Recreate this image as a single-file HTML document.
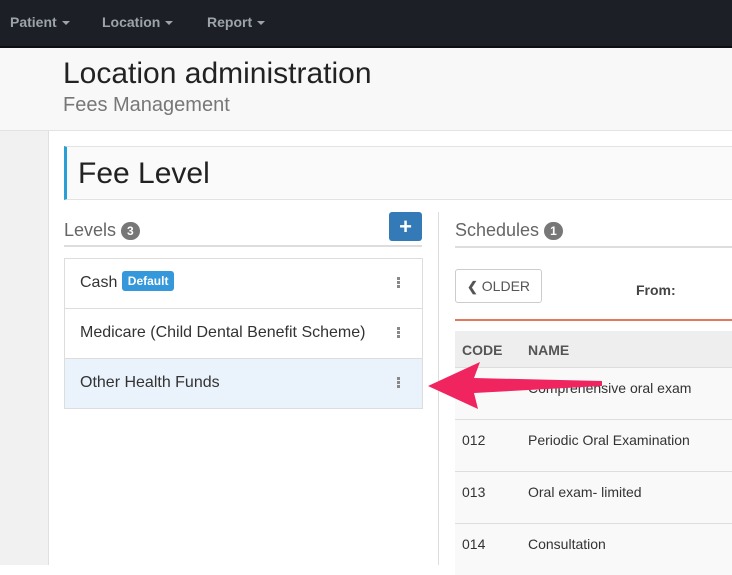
<!DOCTYPE html>
<html><head><style>
body{margin:0;width:732px;height:565px;overflow:hidden;font-family:"Liberation Sans",sans-serif;background:#fff;position:relative}
.a{position:absolute}
.nav{left:0;top:0;width:732px;height:46px;background:#1c2026;border-bottom:2px solid #0d0f12}
.nav span{position:absolute;top:14px;color:#9da3aa;font-weight:bold;font-size:14px}
.car{display:inline-block;width:0;height:0;border-left:4px solid transparent;border-right:4px solid transparent;border-top:4px solid #9da3aa;vertical-align:middle;margin-left:5px}
.hdr{left:0;top:48px;width:732px;height:82px;background:#f8f8f8;border-bottom:1px solid #e3e3e3}
.side{left:0;top:131px;width:48px;height:434px;background:#f1f1f1;border-right:1px solid #e0e0e0}
.badge{display:inline-block;background:#777;color:#fff;border-radius:10px;font-size:12px;font-weight:bold;padding:2px 6px;vertical-align:middle}
.row{position:absolute;left:64px;width:357px;height:49px;border:1px solid #ddd;background:#fff;font-size:16px;color:#333}
.row .t{position:absolute;left:15px;top:15px}
.dots{position:absolute;right:22px;top:18px;width:3px}
.dots i{display:block;width:3px;height:3px;background:#888;margin-bottom:1px}
.tr{position:absolute;left:455px;width:277px;height:51px;background:#f9f9f9;border-top:1px solid #ddd;font-size:14px;color:#333}
.tr span{position:absolute;top:12px}
</style></head><body>
<div class="a nav"><span style="left:10px">Patient<i class="car"></i></span><span style="left:102px">Location<i class="car"></i></span><span style="left:207px">Report<i class="car"></i></span></div>
<div class="a hdr"><div class="a" style="left:63px;top:9px;font-size:30px;color:#222">Location administration</div><div class="a" style="left:63px;top:46px;font-size:20px;color:#777">Fees Management</div></div>
<div class="a side"></div>
<div class="a" style="left:64px;top:146px;width:668px;height:54px;background:#fafafa;border-top:1px solid #e3e3e3;border-bottom:1px solid #e3e3e3;border-left:3px solid #2a9fd6;box-sizing:border-box"><div class="a" style="left:11px;top:10px;font-size:30px;color:#222">Fee Level</div></div>
<div class="a" style="left:64px;top:220px;font-size:18px;color:#666">Levels <span class="badge">3</span></div>
<div class="a" style="left:389px;top:212px;width:33px;height:29px;background:#337ab7;border-radius:3px;color:#fff;font-size:22px;font-weight:bold;text-align:center;line-height:29px">+</div>
<div class="a" style="left:64px;top:245px;width:358px;height:2px;background:#ddd"></div>
<div class="row" style="top:258px"><span class="t">Cash <span style="background:#3498db;color:#fff;font-size:12px;font-weight:bold;padding:3px 6px;border-radius:3px;vertical-align:2px">Default</span></span><div class="dots"><i></i><i></i><i></i></div></div>
<div class="row" style="top:308px"><span class="t">Medicare (Child Dental Benefit Scheme)</span><div class="dots"><i></i><i></i><i></i></div></div>
<div class="row" style="top:358px;background:#eaf2fb"><span class="t">Other Health Funds</span><div class="dots"><i></i><i></i><i></i></div></div>
<div class="a" style="left:438px;top:212px;width:1px;height:353px;background:#ddd"></div>
<div class="a" style="left:455px;top:220px;font-size:18px;color:#666">Schedules <span class="badge">1</span></div>
<div class="a" style="left:455px;top:246px;width:277px;height:2px;background:#ddd"></div>
<div class="a" style="left:455px;top:269px;width:87px;height:34px;border:1px solid #ccc;border-radius:3px;box-sizing:border-box;font-size:14px;color:#555;line-height:32px;text-align:center"><b style="font-size:13px">&#10094;</b> OLDER</div>
<div class="a" style="left:636px;top:282px;font-size:14px;font-weight:bold;color:#444">From:</div>
<div class="a" style="left:455px;top:319px;width:277px;height:2px;background:#e07a5a"></div>
<div class="a" style="left:455px;top:331px;width:277px;height:36px;background:#eee;font-size:14px;font-weight:bold;color:#555"><span class="a" style="left:7px;top:11px">CODE</span><span class="a" style="left:73px;top:11px">NAME</span></div>
<div class="tr" style="top:367px"><span style="left:7px"></span><span style="left:73px">Comprehensive oral exam</span></div>
<div class="tr" style="top:419px"><span style="left:7px">012</span><span style="left:73px">Periodic Oral Examination</span></div>
<div class="tr" style="top:471px"><span style="left:7px">013</span><span style="left:73px">Oral exam- limited</span></div>
<div class="tr" style="top:523px"><span style="left:7px">014</span><span style="left:73px">Consultation</span></div>
<svg class="a" style="left:0;top:0" width="732" height="565"><path d="M428 386 L480 362 L474 378 L602 381 L602 386 L474 393 L478 409 Z" fill="#f0245f"/></svg>
</body></html>
